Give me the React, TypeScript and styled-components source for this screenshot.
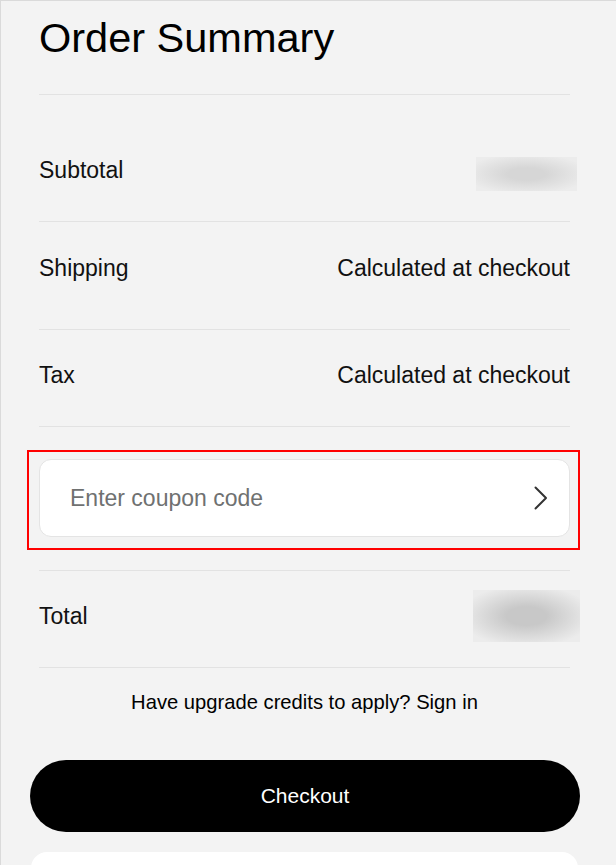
import React from "react";
import styled, { createGlobalStyle } from "styled-components";

const GlobalStyle = createGlobalStyle`
  html, body { margin: 0; padding: 0; background: #f3f3f3; }
  body { font-family: "Liberation Sans", Arial, sans-serif; color: #000; }
  * { box-sizing: border-box; }
`;

const Panel = styled.div`
  min-height: 865px;
  background: #f3f3f3;
  border-top: 1px solid #dadada;
  border-left: 1px solid #dadada;
  padding: 0 46px 0 38px;
  display: flex;
  flex-direction: column;
  overflow: hidden;
`;

const Header = styled.div`
  padding: 13px 0 32px;
  border-bottom: 1px solid #e2e2e2;
`;

const Title = styled.h1`
  margin: 0;
  font-size: 41.5px;
  line-height: 48px;
  font-weight: 400;
  color: #000;
`;

const Row = styled.div<{ $pt: number; $pb: number; $align?: string }>`
  display: flex;
  justify-content: space-between;
  align-items: ${(p) => p.$align || "flex-start"};
  padding: ${(p) => p.$pt}px 0 ${(p) => p.$pb}px;
  border-bottom: 1px solid #e2e2e2;
`;

const Label = styled.span`
  font-size: 23px;
  line-height: 28px;
  color: #111;
`;

const Value = styled.span`
  font-size: 23px;
  line-height: 28px;
  color: #111;
`;

const Blurred = styled.div<{ $w: number; $h: number; $mt?: number; $mr: number; $core: string }>`
  width: ${(p) => p.$w}px;
  height: ${(p) => p.$h}px;
  margin-top: ${(p) => p.$mt || 0}px;
  margin-right: -${(p) => p.$mr}px;
  background: radial-gradient(ellipse 62% 60% at 50% 50%, ${(p) => p.$core} 0%, ${(p) => p.$core} 30%, #ececec 100%);
`;

const CouponSection = styled.div`
  padding: 23px 0 20px;
  border-bottom: 1px solid #e2e2e2;
`;

const Highlight = styled.div`
  border: 2px solid #ff0000;
  margin: 0 -10px 0 -12px;
  padding: 7px 8px 11px 10px;
`;

const CouponBox = styled.label`
  display: flex;
  align-items: center;
  height: 78px;
  background: #fff;
  border: 1px solid #e4e4e4;
  border-radius: 12px;
  padding: 0 20px 0 30px;
`;

const CouponInput = styled.input`
  flex: 1;
  border: none;
  outline: none;
  background: transparent;
  font-family: "Liberation Sans", Arial, sans-serif;
  font-size: 23px;
  color: #000;
  padding: 0;
  &::placeholder { color: #6f7171; }
`;

const Credits = styled.p`
  margin: 0;
  padding-top: 22px;
  font-size: 20.2px;
  line-height: 24px;
  text-align: center;
  color: #000;
`;

const CheckoutButton = styled.button`
  margin: 46px -10px 0 -9px;
  height: 72px;
  border: none;
  border-radius: 36px;
  background: #000;
  color: #fff;
  font-family: "Liberation Sans", Arial, sans-serif;
  font-size: 21px;
  cursor: pointer;
`;

const SecondaryCard = styled.div`
  margin: 20px -8px 0 -8px;
  height: 60px;
  background: #fff;
  border-radius: 16px;
`;

const Chevron = () => (
  <svg width="16" height="24" viewBox="0 0 16 24" fill="none">
    <polyline points="2.5,1.5 13,12 2.5,22.5" stroke="#333" strokeWidth="2" strokeLinecap="round" strokeLinejoin="round" />
  </svg>
);

export default function App() {
  return (
    <>
      <GlobalStyle />
      <Panel>
        <Header>
          <Title>Order Summary</Title>
        </Header>
        <Row $pt={61} $pb={30}>
          <Label>Subtotal</Label>
          <Blurred $w={101} $h={34} $mt={1} $mr={7} $core="#d6d6d6" />
        </Row>
        <Row $pt={32} $pb={47}>
          <Label>Shipping</Label>
          <Value>Calculated at checkout</Value>
        </Row>
        <Row $pt={31} $pb={37}>
          <Label>Tax</Label>
          <Value>Calculated at checkout</Value>
        </Row>
        <CouponSection>
          <Highlight>
            <CouponBox>
              <CouponInput placeholder="Enter coupon code" />
              <Chevron />
            </CouponBox>
          </Highlight>
        </CouponSection>
        <Row $pt={19} $pb={25} $align="center">
          <Label>Total</Label>
          <Blurred $w={107} $h={52} $mr={10} $core="#c8c8c8" />
        </Row>
        <Credits>Have upgrade credits to apply? Sign in</Credits>
        <CheckoutButton>Checkout</CheckoutButton>
        <SecondaryCard />
      </Panel>
    </>
  );
}
